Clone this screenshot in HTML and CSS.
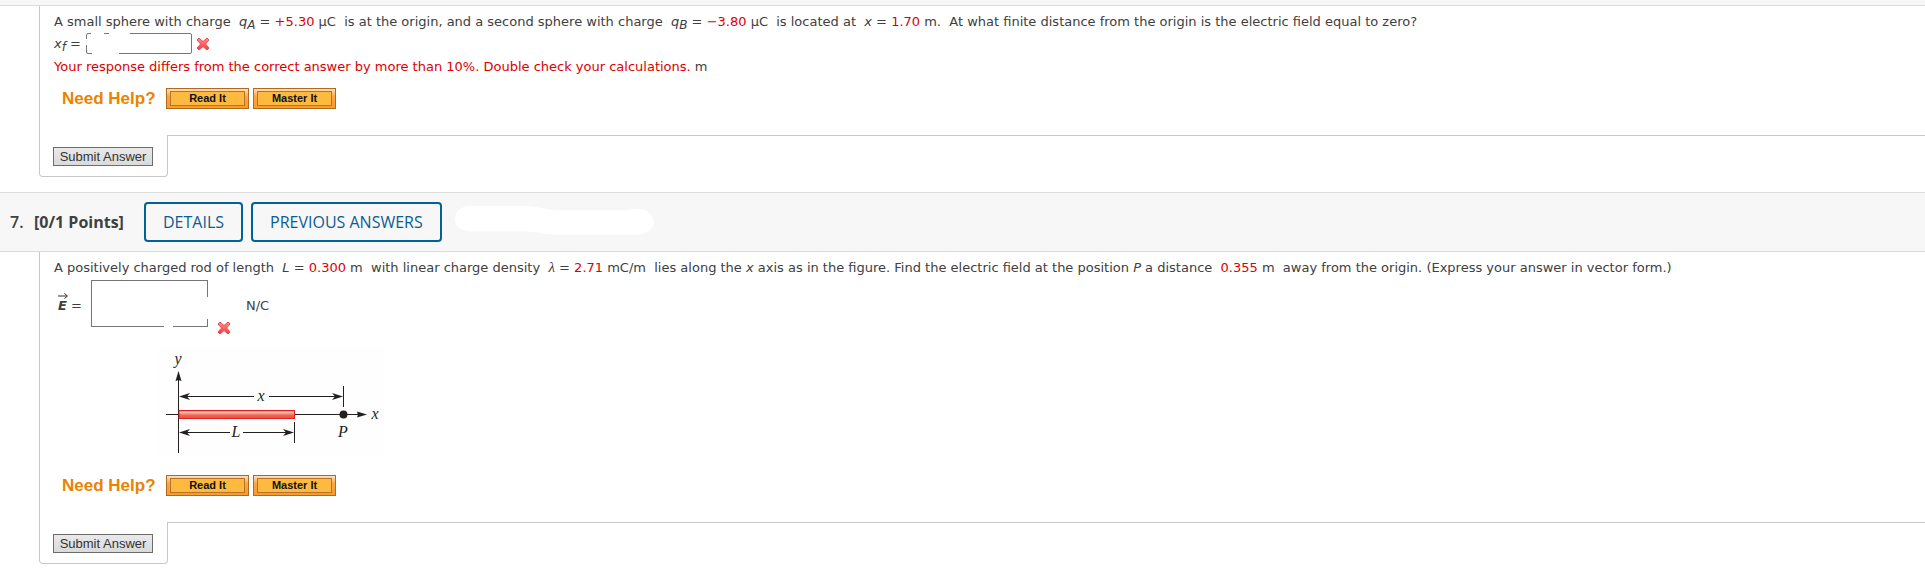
FILE: index.html
```html
<!DOCTYPE html>
<html lang="en">
<head>
<meta charset="utf-8">
<title>Assignment</title>
<link rel="stylesheet" href="styles.css">
</head>
<body>
<svg class="defs" aria-hidden="true">
  <defs>
    <linearGradient id="cross-fill" x1="0" y1="0" x2="0" y2="1">
      <stop offset="0" stop-color="#ff8f8f"/>
      <stop offset="1" stop-color="#f23c3c"/>
    </linearGradient>
    <symbol id="cross" viewBox="0 0 14 14">
      <path d="M3 1 L7 4.6 L11 1 L13 3 L9.6 7 L13 11 L11 13 L7 9.6 L3 13 L1 11 L4.6 7 L1 3 Z" fill="url(#cross-fill)" stroke="#ee4a4f" stroke-width="1" stroke-linejoin="round"/>
    </symbol>
  </defs>
</svg>

<section class="question">
  <div class="strip"></div>
  <div class="problem">
    <p class="line">A small sphere with charge &nbsp;<i>q<sub>A</sub></i> = <span class="num">+5.30</span> µC &nbsp;is at the origin, and a second sphere with charge &nbsp;<i>q<sub>B</sub></i> = <span class="num">−3.80</span> µC &nbsp;is located at &nbsp;<i>x</i> = <span class="num">1.70</span> m. &nbsp;At what finite distance from the origin is the electric field equal to zero?</p>
    <div class="answer scalar">
      <label for="xf"><i>x<sub>f</sub></i> =</label>
      <span class="field">
        <input id="xf" class="short" type="text">
        <span class="gap gap-a"></span><span class="gap gap-b"></span><span class="gap gap-c"></span><span class="gap gap-d"></span><span class="gap gap-e"></span>
      </span>
      <svg class="cross" role="img" aria-label="Incorrect"><use href="#cross"/></svg>
    </div>
    <p class="line feedback"><span class="num">Your response differs from the correct answer by more than 10%. Double check your calculations.</span> m</p>
    <div class="help">
      <span class="help-title">Need Help?</span>
      <button class="help-btn" type="button"><span>Read It</span></button>
      <button class="help-btn" type="button"><span>Master It</span></button>
    </div>
  </div>
  <div class="footer">
    <div class="tab"><button class="submit" type="button">Submit Answer</button></div>
    <div class="rule"></div>
  </div>
</section>

<section class="question">
  <header class="header">
    <h2 class="title"><span class="index">7.</span>[0/1 Points]</h2>
    <button class="action" type="button">DETAILS</button>
    <button class="action" type="button">PREVIOUS ANSWERS</button>
    <svg class="blank" viewBox="0 0 194 28" preserveAspectRatio="none" aria-hidden="true"><path d="M12 0 H66 C80 0 88 4 102 4 H168 C176 2 182 2 186 5 Q194 10 193 17 Q190 27 178 27.500 H94 C84 27 76 24.500 66 24.500 H14 Q0 23 0 12 Q1 2 12 0Z" fill="#fff"/></svg>
  </header>
  <div class="problem">
    <p class="line">A positively charged rod of length &nbsp;<i>L</i> = <span class="num">0.300</span> m &nbsp;with linear charge density &nbsp;<i class="greek">λ</i> = <span class="num">2.71</span> mC/m &nbsp;lies along the <i>x</i> axis as in the figure. Find the electric field at the position <i>P</i> a distance &nbsp;<span class="num">0.355</span> m &nbsp;away from the origin. (Express your answer in vector form.)</p>
    <div class="answer vector">
      <label for="ef"><span class="vec"><svg viewBox="0 0 10 6" aria-hidden="true"><path d="M0 3 H9 M6.500 .5 L9.500 3 L6.500 5.500" fill="none" stroke="#333"/></svg><b><i>E</i></b></span> =</label>
      <span class="field">
        <input id="ef" class="tall" type="text">
        <span class="gap gap-f"></span><span class="gap gap-g"></span>
      </span>
      <svg class="cross" role="img" aria-label="Incorrect"><use href="#cross"/></svg>
      <span class="unit">N/C</span>
    </div>
    <svg class="figure" viewBox="158 348 227 109" role="img" aria-label="Charged rod of length L on the x axis with point P">
      <defs>
        <linearGradient id="rod" x1="0" y1="0" x2="0" y2="1">
          <stop offset="0" stop-color="#f07a66"/>
          <stop offset=".25" stop-color="#fcb8a6"/>
          <stop offset=".6" stop-color="#ee6650"/>
          <stop offset="1" stop-color="#e8503c"/>
        </linearGradient>
      </defs>
      <rect x="158" y="348" width="227" height="109" fill="#fefefe"/>
      <g stroke="#231f20" fill="none">
        <path d="M178.500 378 V453 M166 414.500 H360 M343.500 386 V407 M294.500 422 V443"/>
        <path d="M184 396.500 H254 M269 396.500 H338 M184 432.500 H230 M243 432.500 H290"/>
      </g>
      <g fill="#231f20">
        <path d="M178.500 371 L181.500 381 Q178.500 379.500 175.500 381Z"/>
        <path d="M367 414.500 L357 411.500 Q358.500 414.500 357 417.500Z"/>
        <path d="M179 396.500 L190 393 L187 396.500 L190 400Z"/>
        <path d="M343 396.500 L332 393 L335 396.500 L332 400Z"/>
        <path d="M179 432.500 L190 429 L187 432.500 L190 436Z"/>
        <path d="M294 432.500 L283 429 L286 432.500 L283 436Z"/>
        <circle cx="343.500" cy="414.500" r="4"/>
      </g>
      <rect x="179" y="410.500" width="115.500" height="8" fill="url(#rod)" stroke="#dd1f26"/>
      <g class="figure-text">
        <text x="178" y="364">y</text>
        <text x="261" y="401">x</text>
        <text x="375" y="419">x</text>
        <text x="236" y="437">L</text>
        <text x="343" y="437">P</text>
      </g>
    </svg>
    <div class="help">
      <span class="help-title">Need Help?</span>
      <button class="help-btn" type="button"><span>Read It</span></button>
      <button class="help-btn" type="button"><span>Master It</span></button>
    </div>
  </div>
  <div class="footer">
    <div class="tab"><button class="submit" type="button">Submit Answer</button></div>
    <div class="rule"></div>
  </div>
</section>
</body>
</html>
```

FILE: styles.css
```css
* { box-sizing: border-box; }

body {
  margin: 0;
  background: #fff;
  color: #404040;
  font: 13px/20px Verdana, "DejaVu Sans", sans-serif;
}

.defs { position: absolute; width: 0; height: 0; }

.question { margin-bottom: 15px; }

.strip {
  height: 6px;
  background: #f7f7f7;
  border-bottom: 1px solid #dcdcdc;
}

/* Question header */
.header {
  display: flex;
  align-items: center;
  gap: 8px;
  height: 60px;
  padding-left: 10px;
  background: #f7f7f7;
  border-top: 1px solid #dcdcdc;
  border-bottom: 1px solid #dcdcdc;
}

.title {
  width: 126px;
  margin: 0;
  font: 700 16px/20px "Open Sans", sans-serif;
  white-space: nowrap;
}

.index { display: inline-block; width: 24px; font-weight: 600; }

.action {
  height: 40px;
  padding: 0 17px;
  background: #f7f7f7;
  border: 2px solid #006298;
  border-radius: 4px;
  color: #0b5c94;
  font: 16px/20px "Open Sans", sans-serif;
}

.blank { width: 200px; height: 29px; margin: 0 0 4px 5px; }

/* Question body */
.problem {
  margin-left: 39px;
  padding: 6px 0 26px 14px;
  border-left: 1px solid #c8c8c8;
}

.line { margin: 0; }
.num { color: #d00; }
.greek { font: italic 15px/16px "Liberation Serif", serif; }

sub {
  font-size: 12px;
  line-height: 0;
  vertical-align: -3px;
}

.answer {
  display: flex;
  align-items: center;
  height: 21px;
}

.answer label { width: 32px; }

.field { position: relative; display: flex; }

input {
  margin: 0;
  padding: 1px 2px;
  background: #fff;
  border: 1px solid #767676;
  font: inherit;
}

.short { width: 106px; height: 21px; border-radius: 2px; }
.tall { width: 117px; height: 47px; }

.cross { width: 14px; height: 14px; margin-left: 4px; }

/* Breaks in the input outlines */
.gap { position: absolute; background: #fff; }
.gap-a { left: 5px; top: 0; width: 13px; height: 1px; }
.gap-b { left: 23px; top: 0; width: 21px; height: 1px; }
.gap-c { left: 0; top: 6px; width: 1px; height: 6px; }
.gap-d { left: 6px; bottom: 0; width: 10px; height: 1px; }
.gap-e { left: 16px; bottom: 0; width: 17px; height: 1px; }
.gap-f { right: 0; top: 17px; width: 1px; height: 22px; }
.gap-g { left: 73px; bottom: 0; width: 9px; height: 1px; }

.scalar { margin-top: 1px; }
.feedback { margin-top: 3px; }

.vector { height: 57px; margin-top: 2px; align-items: flex-start; }
.vector label { width: 37px; padding: 16px 0 0 4px; }
.vector .cross { margin: 41px 0 0 9px; }

.vec { position: relative; }
.vec svg { position: absolute; left: 0; top: -5px; width: 10px; height: 6px; }

.unit { padding: 16px 0 0 15px; }

.figure { display: block; width: 227px; height: 109px; margin: 11px 0 18px 104px; }

.figure-text {
  fill: #231f20;
  font: italic 16px "Liberation Serif", serif;
  text-anchor: middle;
}

/* Help row */
.help {
  display: flex;
  align-items: center;
  gap: 4px;
  margin: 11px 0 0 8px;
}

.help-title {
  width: 100px;
  color: #e98300;
  font: 700 17px/20px "Liberation Sans", Arial, sans-serif;
}

.help-btn {
  width: 83px;
  height: 21px;
  padding: 2px 3px;
  background: linear-gradient(#fde0c0, #fba544 40%, #f99a2c);
  border: 1px solid #b06a1e;
  color: #111;
  font: 700 11px/13px "Liberation Sans", Arial, sans-serif;
}

.help-btn span {
  display: block;
  background: #fdb940;
  border: 1px solid #b87424;
}

/* Submit tab */
.footer { display: flex; margin-left: 39px; }

.tab {
  padding: 12px 14px 10px 13px;
  border: solid #c8c8c8;
  border-width: 0 1px 1px;
  border-radius: 0 0 4px 4px;
}

.submit {
  display: block;
  width: 100px;
  height: 19px;
  padding: 0;
  background: linear-gradient(#e9e9e9, #dadada);
  border: 1px solid #6c6c6c;
  color: #333;
  font: 13px/16px "Liberation Sans", Arial, sans-serif;
}

.rule { flex: 1; border-top: 1px solid #c8c8c8; }
```
